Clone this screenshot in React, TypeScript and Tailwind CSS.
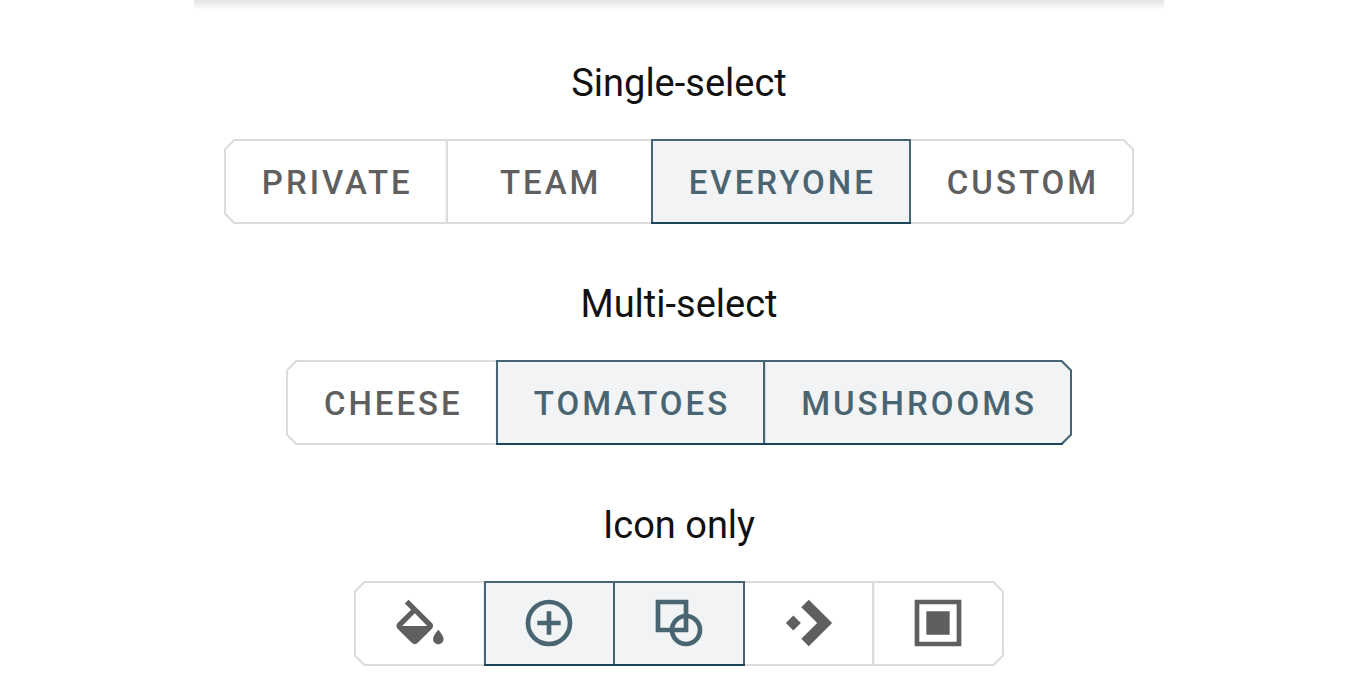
import React, { useState } from 'react'

import clsx from 'clsx'

type Option = {
  id: string
  label: string
  icon?: React.ReactNode
}

type ToggleGroupProps = {
  title: string
  options: Option[]
  initial: string[]
  multiple?: boolean
  iconOnly?: boolean
}

const access: Option[] = [
  { id: 'private', label: 'PRIVATE' },
  { id: 'team', label: 'TEAM' },
  { id: 'everyone', label: 'EVERYONE' },
  { id: 'custom', label: 'CUSTOM' },
]

const toppings: Option[] = [
  { id: 'cheese', label: 'CHEESE' },
  { id: 'tomatoes', label: 'TOMATOES' },
  { id: 'mushrooms', label: 'MUSHROOMS' },
]

const tools: Option[] = [
  {
    id: 'fill',
    label: 'Fill',
    icon: (
      <svg viewBox="1.3 -1.8 21.4 21.4" className="size-14" fill="currentColor" aria-hidden="true">
        <path d="M16.56 8.94L7.62 0 6.21 1.41l2.38 2.38-5.15 5.15c-.59.59-.59 1.54 0 2.12l5.5 5.5c.29.29.68.44 1.06.44s.77-.15 1.06-.44l5.5-5.5c.59-.58.59-1.53 0-2.12zM5.21 10L10 5.21 14.79 10H5.21zM19 11.5s-2 2.17-2 3.5c0 1.1.9 2 2 2s2-.9 2-2c0-1.33-2-3.5-2-3.5z" />
      </svg>
    ),
  },
  {
    id: 'add',
    label: 'Add',
    icon: (
      <svg viewBox="0 0 24 24" className="size-14" fill="none" stroke="currentColor" strokeWidth="2" aria-hidden="true">
        <circle cx="12" cy="12" r="9" />
        <path d="M12 7v10M7 12h10" />
      </svg>
    ),
  },
  {
    id: 'shapes',
    label: 'Shapes',
    icon: (
      <svg viewBox="0 0 24 24" className="size-14" fill="none" stroke="currentColor" strokeWidth="2" aria-hidden="true">
        <path d="M3 3h12v12H3z" />
        <circle cx="15" cy="15" r="6" />
      </svg>
    ),
  },
  {
    id: 'forward',
    label: 'Forward',
    icon: (
      <svg viewBox="0 0 24 24" className="size-14" fill="currentColor" aria-hidden="true">
        <path d="M2.1 12l3.2-3.2L8.5 12l-3.2 3.2zM8.7 5.2L11.9 2l10 10-10 10-3.2-3.2 6.8-6.8z" />
      </svg>
    ),
  },
  {
    id: 'frame',
    label: 'Frame',
    icon: (
      <svg viewBox="0 0 24 24" className="size-14" fill="currentColor" aria-hidden="true">
        <path d="M2 2v20h20V2H2zm18 18H4V4h16v16z" />
        <path d="M7 7h10v10H7z" />
      </svg>
    ),
  },
]

// The outer shape is painted in the border colour, the inner one (1px smaller cut) in the fill colour
const outerFirst =
  '[clip-path:polygon(10px_0,100%_0,100%_100%,10px_100%,0_calc(100%-10px),0_10px)]'
const innerFirst =
  '[clip-path:polygon(9px_0,100%_0,100%_100%,9px_100%,0_calc(100%-9px),0_9px)]'
const outerLast =
  '[clip-path:polygon(0_0,calc(100%-10px)_0,100%_10px,100%_calc(100%-10px),calc(100%-10px)_100%,0_100%)]'
const innerLast =
  '[clip-path:polygon(0_0,calc(100%-9px)_0,100%_9px,100%_calc(100%-9px),calc(100%-9px)_100%,0_100%)]'

const ToggleGroup = ({ title, options, initial, multiple, iconOnly }: ToggleGroupProps) => {
  const [selected, setSelected] = useState(initial)

  const toggle = (id: string) => {
    if (!multiple) {
      setSelected([id])
      return
    }

    setSelected((prev) => (prev.includes(id) ? prev.filter((item) => item !== id) : [...prev, id]))
  }

  return (
    <section className="flex w-full flex-col items-center">
      <h2 className="text-[38px] leading-[44px] font-normal text-[#111]">{title}</h2>

      <div
        role="group"
        aria-label={title}
        className={clsx('mt-[34px] flex', iconOnly && 'w-full max-w-[650px]')}
      >
        {options.map((option, index) => {
          const active = selected.includes(option.id)
          const first = index === 0
          const last = index === options.length - 1

          return (
            <button
              key={option.id}
              type="button"
              aria-pressed={active}
              aria-label={option.icon ? option.label : undefined}
              onClick={() => toggle(option.id)}
              className={clsx(
                'relative flex h-[85px] cursor-pointer p-[2px]',
                iconOnly ? 'flex-1' : 'min-w-[207px]',
                active
                  ? 'z-10 bg-[linear-gradient(to_top,#1a445a_2px,#456575_2px)] text-[#4a6572]'
                  : 'bg-[#dcdcdc] text-[#5f5f5f]',
                !first && '-ml-[2px]',
                first && outerFirst,
                last && outerLast
              )}
            >
              <span
                className={clsx(
                  'flex h-full flex-1 items-center justify-center text-[33px] font-medium tracking-[3px]',
                  iconOnly ? 'pb-[2px]' : 'pt-[2px] pr-[33px] pl-9',
                  active ? 'bg-[#f2f3f5]' : 'bg-white',
                  first && innerFirst,
                  last && innerLast
                )}
              >
                {option.icon ?? option.label}
              </span>
            </button>
          )
        })}
      </div>
    </section>
  )
}

const App = () => {
  return (
    <main className="mx-auto max-w-[970px] bg-white font-[Roboto,sans-serif]">
      <div className="h-[10px] bg-linear-to-b from-[#e4e4e4] to-white" />

      <div className="flex flex-col items-center gap-[58px] pt-[51px] pb-8">
        <ToggleGroup title="Single-select" options={access} initial={['everyone']} />
        <ToggleGroup title="Multi-select" options={toppings} initial={['tomatoes', 'mushrooms']} multiple />
        <ToggleGroup title="Icon only" options={tools} initial={['add', 'shapes']} multiple iconOnly />
      </div>
    </main>
  )
}

export default App
